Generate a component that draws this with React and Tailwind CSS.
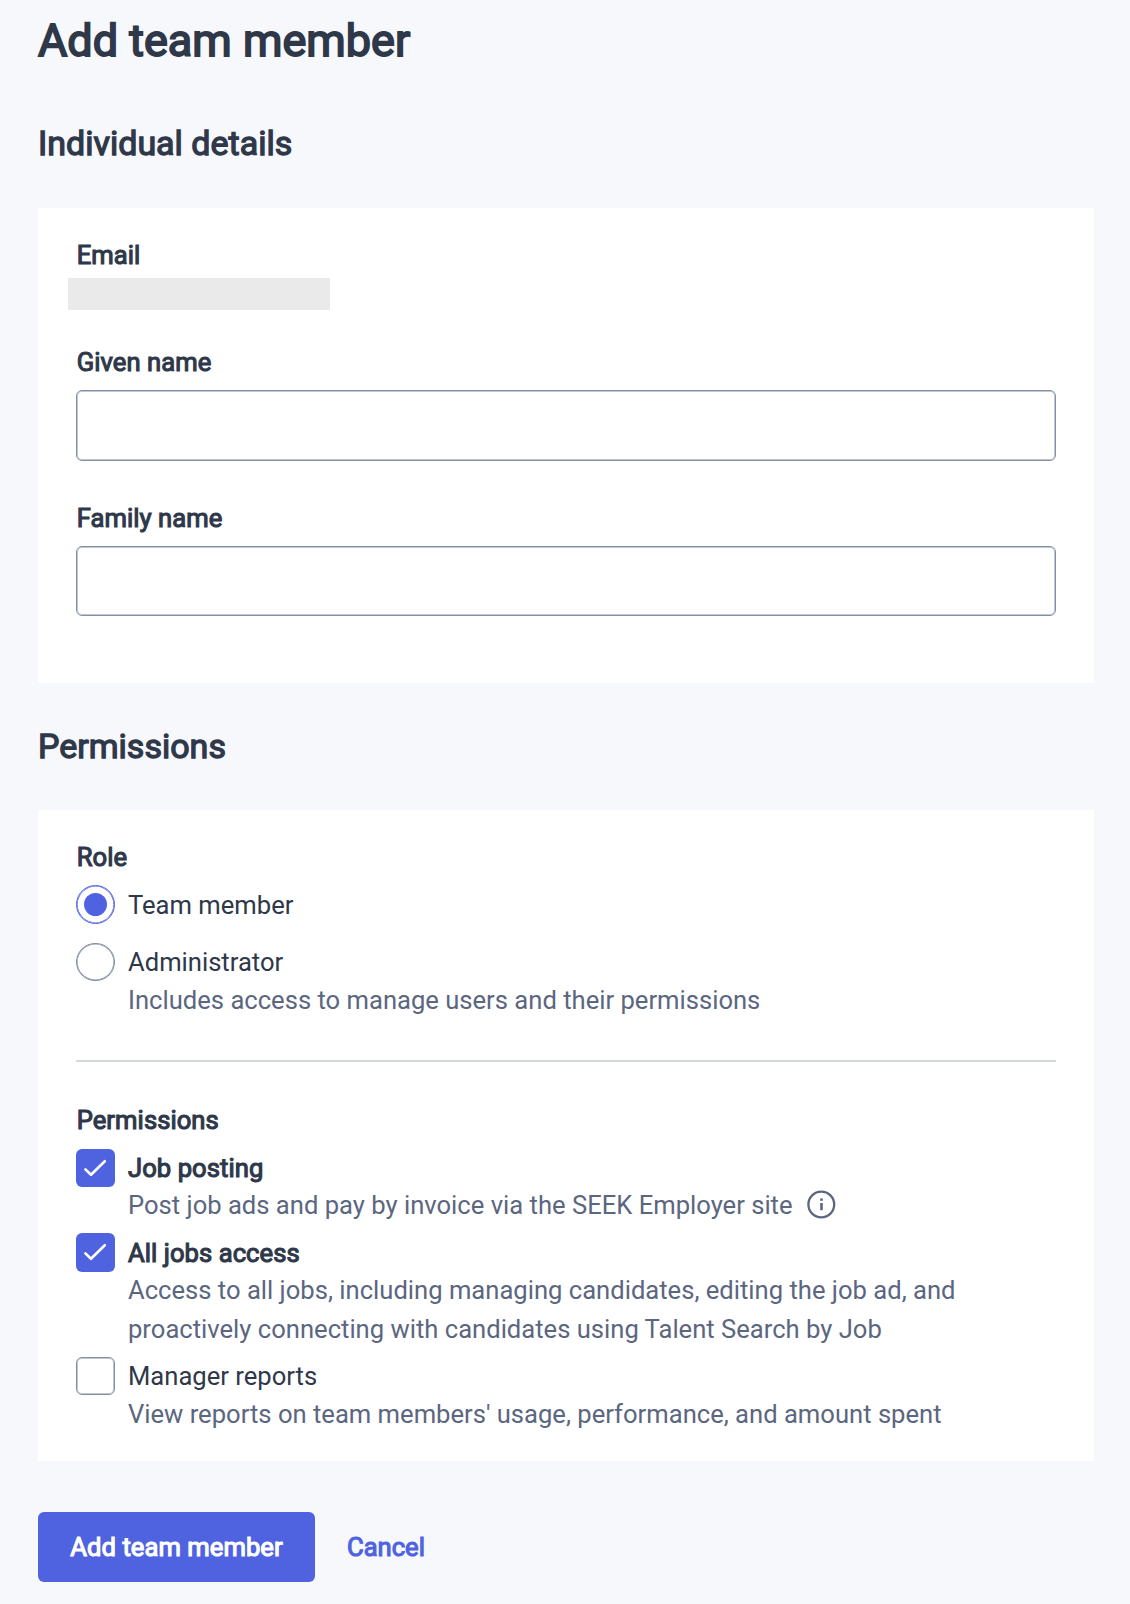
import React, { useState } from 'react';

const Heading = ({ children }) => (
    <h2 className="h-[42px] text-[34px] leading-[42px] text-[#2e3849] [-webkit-text-stroke:1.3px_#2e3849]">{children}</h2>
);

const Label = ({ children }) => (
    <p className="h-[38px] pl-[0.7px] text-[25.6px] leading-[38px] tracking-[0.06px] text-[#2e3849] [-webkit-text-stroke:1.1px_#2e3849]">{children}</p>
);

const TextField = ({ label, inputClass }) => (
    <label className="block">
        <Label>{label}</Label>
        <input
            type="text"
            className={`block w-full mt-[9px] px-5 bg-white border border-[#838fa5] shadow-[inset_0_0_0_1px_#c1c7d2] rounded-[6px] text-[25.6px] outline-none ${inputClass}`}
        />
    </label>
);

const Radio = ({ label, description, checked, onChange, boxClass, textClass = '' }) => (
    <div className="flex gap-[13px]">
        <button
            onClick={onChange}
            className={`w-[39px] shrink-0 rounded-full border flex items-center justify-center ${boxClass} ${checked ? 'border-[#4f63e1] shadow-[inset_0_0_0_0.6px_#4f63e1]' : 'border-[#838fa5] shadow-[inset_0_0_0_0.6px_#838fa5]'}`}
        >
            {checked && <span className="w-[23px] h-[23px] rounded-full bg-[#4f63e1]" />}
        </button>
        <div className={textClass}>
            <p className="text-[#2e3849]">{label}</p>
            {description && <p className="text-[#5b667f]">{description}</p>}
        </div>
    </div>
);

const Checkbox = ({ label, description, checked, onChange, boxClass, labelClass, info }) => (
    <div className="flex gap-[13px]">
        <button
            onClick={onChange}
            className={`w-[39px] shrink-0 rounded-[6px] flex items-start justify-center ${boxClass} ${checked ? 'bg-[#4f63e1]' : 'border border-[#838fa5] shadow-[inset_0_0_0_1px_#c1c7d2]'}`}
        >
            {checked && (
                <svg width="39" height="38" viewBox="0 0 39 38" fill="none" stroke="white" strokeWidth="2.6" strokeLinecap="round" strokeLinejoin="round">
                    <path d="M9.4 20.4 L15 25.8 L28.8 12.2" />
                </svg>
            )}
        </button>
        <div>
            <p className={`text-[#2e3849] ${labelClass} ${checked ? 'tracking-[0.06px] [-webkit-text-stroke:1.1px_#2e3849]' : ''}`}>{label}</p>
            <div className="flex items-center text-[#5b667f]">
                <p>{description}</p>
                {info && (
                    <svg className="ml-[14px] mb-[2px]" width="29" height="29" viewBox="0 0 29 29" fill="none" stroke="#5b667f">
                        <circle cx="14.3" cy="14.5" r="12.9" strokeWidth="2.3" />
                        <path d="M14.5 13V20.2" strokeWidth="2.6" />
                        <path d="M14.5 8.4V10.8" strokeWidth="2.6" />
                    </svg>
                )}
            </div>
        </div>
    </div>
);

const App = () => {
    const [role, setRole] = useState('member');
    const [perms, setPerms] = useState({ posting: true, jobs: true, reports: false });
    const toggle = (key) => setPerms({ ...perms, [key]: !perms[key] });

    return (
        <div className="w-[1130px] h-[1604px] overflow-hidden bg-[#f7f8fc] pl-[38px] pr-9 pt-[13px] font-[Roboto,sans-serif] text-[25.6px] leading-[38px]">
            <h1 className="h-14 mb-[53px] text-[45px] leading-[56px] text-[#2e3849] [-webkit-text-stroke:1.8px_#2e3849]">Add team member</h1>

            {/* INDIVIDUAL DETAILS */}
            <Heading>Individual details</Heading>
            <section className="mt-11 h-[475px] bg-white px-[38px] pt-7">
                <Label>Email</Label>
                <div className="-ml-2 mt-1 mb-[33px] w-[262px] h-8 bg-[#eaeaea]" />
                <TextField label="Given name" inputClass="h-[71px]" />
                <div className="mt-[38px]">
                    <TextField label="Family name" inputClass="h-[70px]" />
                </div>
            </section>

            {/* PERMISSIONS */}
            <div className="mt-[42px]">
                <Heading>Permissions</Heading>
            </div>
            <section className="mt-[43px] h-[651px] bg-white px-[38px] pt-7">
                <Label>Role</Label>
                <div className="mt-[9px] flex flex-col">
                    <Radio label="Team member" checked={role === 'member'} onChange={() => setRole('member')} boxClass="h-[39px]" textClass="pt-[1px]" />
                    <div className="mt-[19px]">
                        <Radio
                            label="Administrator"
                            description="Includes access to manage users and their permissions"
                            checked={role === 'admin'}
                            onChange={() => setRole('admin')}
                            boxClass="h-[38px]"
                        />
                    </div>
                </div>
                <hr className="mt-[41px] mb-[39px] border-0 h-[2px] bg-[#d2d7df]" />
                <Label>Permissions</Label>
                <div className="mt-[10px] flex flex-col">
                    <Checkbox
                        label="Job posting"
                        description="Post job ads and pay by invoice via the SEEK Employer site"
                        checked={perms.posting}
                        onChange={() => toggle('posting')}
                        boxClass="h-[38px]"
                        labelClass="h-[37px]"
                        info
                    />
                    <div className="mt-[9px]">
                        <Checkbox
                            label="All jobs access"
                            description={
                                <>
                                    <span className="block">Access to all jobs, including managing candidates, editing the job ad, and</span>
                                    <span className="block pt-[1px]">proactively connecting with candidates using Talent Search by Job</span>
                                </>
                            }
                            checked={perms.jobs}
                            onChange={() => toggle('jobs')}
                            boxClass="h-[39px]"
                            labelClass="h-[38px] pt-[1px]"
                        />
                    </div>
                    <div className="mt-[9px]">
                        <Checkbox
                            label="Manager reports"
                            description="View reports on team members' usage, performance, and amount spent"
                            checked={perms.reports}
                            onChange={() => toggle('reports')}
                            boxClass="h-[38px]"
                            labelClass="h-[38px]"
                        />
                    </div>
                </div>
            </section>

            {/* ACTIONS */}
            <div className="mt-[51px] flex items-center gap-8">
                <button className="w-[277px] h-[70px] rounded-[6px] bg-[#4f63e1] text-white tracking-[0.05px] [-webkit-text-stroke:1.1px_white]">Add team member</button>
                <button className="text-[#4f63e1] [-webkit-text-stroke:1.1px_#4f63e1]">Cancel</button>
            </div>
        </div>
    );
};

export default App;
